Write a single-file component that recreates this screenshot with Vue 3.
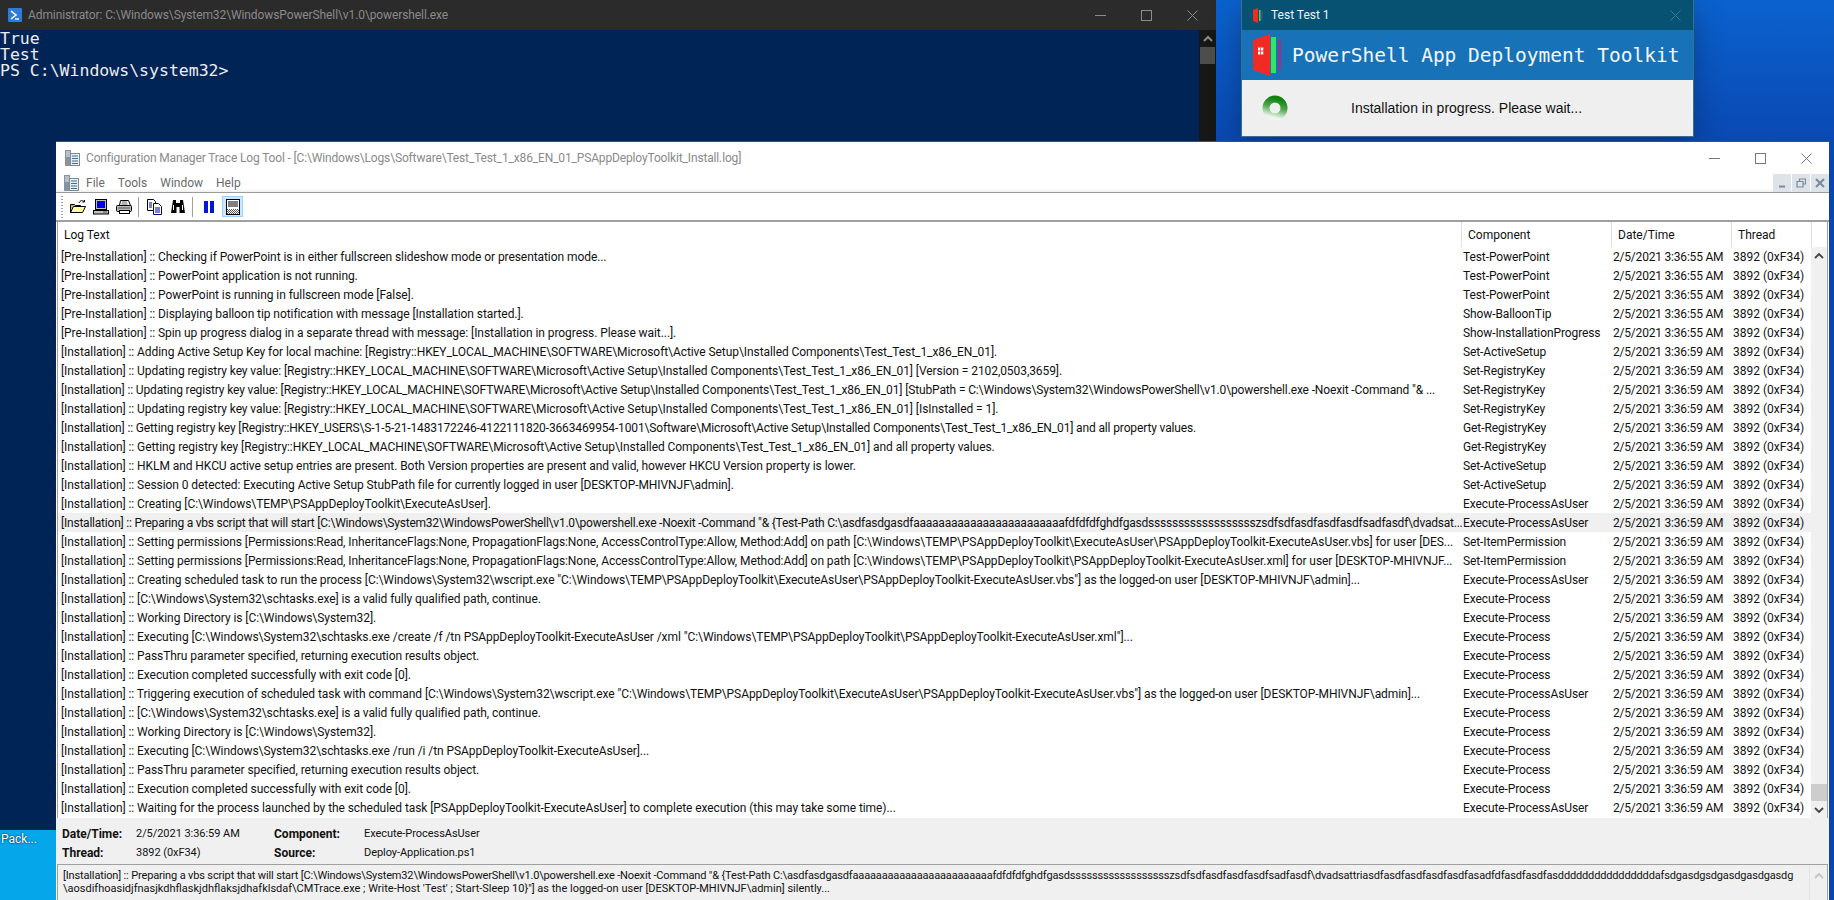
<script setup>
const tag1 = '[Pre-Installation] :: '
const tag2 = '[Installation] :: '
const rows = [
  [tag1 + 'Checking if PowerPoint is in either fullscreen slideshow mode or presentation mode...', 'Test-PowerPoint', '55'],
  [tag1 + 'PowerPoint application is not running.', 'Test-PowerPoint', '55'],
  [tag1 + 'PowerPoint is running in fullscreen mode [False].', 'Test-PowerPoint', '55'],
  [tag1 + 'Displaying balloon tip notification with message [Installation started.].', 'Show-BalloonTip', '55'],
  [tag1 + 'Spin up progress dialog in a separate thread with message: [Installation in progress. Please wait...].', 'Show-InstallationProgress', '55'],
  [tag2 + 'Adding Active Setup Key for local machine: [Registry::HKEY_LOCAL_MACHINE\\SOFTWARE\\Microsoft\\Active Setup\\Installed Components\\Test_Test_1_x86_EN_01].', 'Set-ActiveSetup', '59'],
  [tag2 + 'Updating registry key value: [Registry::HKEY_LOCAL_MACHINE\\SOFTWARE\\Microsoft\\Active Setup\\Installed Components\\Test_Test_1_x86_EN_01] [Version = 2102,0503,3659].', 'Set-RegistryKey', '59'],
  [tag2 + 'Updating registry key value: [Registry::HKEY_LOCAL_MACHINE\\SOFTWARE\\Microsoft\\Active Setup\\Installed Components\\Test_Test_1_x86_EN_01] [StubPath = C:\\Windows\\System32\\WindowsPowerShell\\v1.0\\powershell.exe -Noexit -Command "& ...', 'Set-RegistryKey', '59', false, true],
  [tag2 + 'Updating registry key value: [Registry::HKEY_LOCAL_MACHINE\\SOFTWARE\\Microsoft\\Active Setup\\Installed Components\\Test_Test_1_x86_EN_01] [IsInstalled = 1].', 'Set-RegistryKey', '59'],
  [tag2 + 'Getting registry key [Registry::HKEY_USERS\\S-1-5-21-1483172246-4122111820-3663469954-1001\\Software\\Microsoft\\Active Setup\\Installed Components\\Test_Test_1_x86_EN_01] and all property values.', 'Get-RegistryKey', '59', false, true],
  [tag2 + 'Getting registry key [Registry::HKEY_LOCAL_MACHINE\\SOFTWARE\\Microsoft\\Active Setup\\Installed Components\\Test_Test_1_x86_EN_01] and all property values.', 'Get-RegistryKey', '59'],
  [tag2 + 'HKLM and HKCU active setup entries are present. Both Version properties are present and valid, however HKCU Version property is lower.', 'Set-ActiveSetup', '59'],
  [tag2 + 'Session 0 detected: Executing Active Setup StubPath file for currently logged in user [DESKTOP-MHIVNJF\\admin].', 'Set-ActiveSetup', '59'],
  [tag2 + 'Creating [C:\\Windows\\TEMP\\PSAppDeployToolkit\\ExecuteAsUser].', 'Execute-ProcessAsUser', '59'],
  [tag2 + 'Preparing a vbs script that will start [C:\\Windows\\System32\\WindowsPowerShell\\v1.0\\powershell.exe -Noexit -Command "& {Test-Path C:\\asdfasdgasdfaaaaaaaaaaaaaaaaaaaaaaaafdfdfdfghdfgasdsssssssssssssssssszsdfsdfasdfasdfasdfsadfasdf\\dvadsat...', 'Execute-ProcessAsUser', '59', true],
  [tag2 + 'Setting permissions [Permissions:Read, InheritanceFlags:None, PropagationFlags:None, AccessControlType:Allow, Method:Add] on path [C:\\Windows\\TEMP\\PSAppDeployToolkit\\ExecuteAsUser\\PSAppDeployToolkit-ExecuteAsUser.vbs] for user [DES...', 'Set-ItemPermission', '59'],
  [tag2 + 'Setting permissions [Permissions:Read, InheritanceFlags:None, PropagationFlags:None, AccessControlType:Allow, Method:Add] on path [C:\\Windows\\TEMP\\PSAppDeployToolkit\\PSAppDeployToolkit-ExecuteAsUser.xml] for user [DESKTOP-MHIVNJF...', 'Set-ItemPermission', '59'],
  [tag2 + 'Creating scheduled task to run the process [C:\\Windows\\System32\\wscript.exe "C:\\Windows\\TEMP\\PSAppDeployToolkit\\ExecuteAsUser\\PSAppDeployToolkit-ExecuteAsUser.vbs"] as the logged-on user [DESKTOP-MHIVNJF\\admin]...', 'Execute-ProcessAsUser', '59'],
  [tag2 + '[C:\\Windows\\System32\\schtasks.exe] is a valid fully qualified path, continue.', 'Execute-Process', '59'],
  [tag2 + 'Working Directory is [C:\\Windows\\System32].', 'Execute-Process', '59'],
  [tag2 + 'Executing [C:\\Windows\\System32\\schtasks.exe /create /f /tn PSAppDeployToolkit-ExecuteAsUser /xml "C:\\Windows\\TEMP\\PSAppDeployToolkit\\PSAppDeployToolkit-ExecuteAsUser.xml"]...', 'Execute-Process', '59'],
  [tag2 + 'PassThru parameter specified, returning execution results object.', 'Execute-Process', '59'],
  [tag2 + 'Execution completed successfully with exit code [0].', 'Execute-Process', '59'],
  [tag2 + 'Triggering execution of scheduled task with command [C:\\Windows\\System32\\wscript.exe "C:\\Windows\\TEMP\\PSAppDeployToolkit\\ExecuteAsUser\\PSAppDeployToolkit-ExecuteAsUser.vbs"] as the logged-on user [DESKTOP-MHIVNJF\\admin]...', 'Execute-ProcessAsUser', '59'],
  [tag2 + '[C:\\Windows\\System32\\schtasks.exe] is a valid fully qualified path, continue.', 'Execute-Process', '59'],
  [tag2 + 'Working Directory is [C:\\Windows\\System32].', 'Execute-Process', '59'],
  [tag2 + 'Executing [C:\\Windows\\System32\\schtasks.exe /run /i /tn PSAppDeployToolkit-ExecuteAsUser]...', 'Execute-Process', '59'],
  [tag2 + 'PassThru parameter specified, returning execution results object.', 'Execute-Process', '59'],
  [tag2 + 'Execution completed successfully with exit code [0].', 'Execute-Process', '59'],
  [tag2 + 'Waiting for the process launched by the scheduled task [PSAppDeployToolkit-ExecuteAsUser] to complete execution (this may take some time)...', 'Execute-ProcessAsUser', '59'],
]
const detail1 = tag2 + 'Preparing a vbs script that will start [C:\\Windows\\System32\\WindowsPowerShell\\v1.0\\powershell.exe -Noexit -Command "& {Test-Path C:\\asdfasdgasdfaaaaaaaaaaaaaaaaaaaaaaaafdfdfdfghdfgasdsssssssssssssssssszsdfsdfasdfasdfasdfsadfasdf\\dvadsattriasdfasdfasdfasdfasdfasadfdfasdfasdfasddddddddddddddddafsdgasdgsdgasdgasdgasdg'
const detail2 = "\\aosdifhoasidjfnasjkdhflaskjdhflaksjdhafklsdaf\\CMTrace.exe ; Write-Host 'Test' ; Start-Sleep 10}\"] as the logged-on user [DESKTOP-MHIVNJF\\admin] silently..."
</script>

<template>
  <div class="desktop">
    <section class="ps-win">
      <header class="ps-title">
        <svg class="ps-icon" width="14" height="14" viewBox="0 0 14 14">
          <rect width="14" height="14" rx="1" fill="#2f7bd9" />
          <path d="M3 3l5 4-5 4" fill="none" stroke="#fff" stroke-width="1.6" />
          <path d="M7 11h4" stroke="#fff" stroke-width="1.4" />
        </svg>
        <span class="ps-caption">Administrator: C:\Windows\System32\WindowsPowerShell\v1.0\powershell.exe</span>
        <div class="caption-buttons ps-buttons">
          <svg width="11" height="11" viewBox="0 0 11 11"><path d="M0 5.5h11" stroke="#8b8b8b" /></svg>
          <svg width="11" height="11" viewBox="0 0 11 11"><rect x="0.5" y="0.5" width="10" height="10" fill="none" stroke="#8b8b8b" /></svg>
          <svg width="11" height="11" viewBox="0 0 11 11"><path d="M0.5 0.5l10 10M10.5 0.5l-10 10" stroke="#8b8b8b" /></svg>
        </div>
      </header>
      <pre class="ps-body">True
Test
PS C:\Windows\system32&gt;</pre>
      <div class="ps-scroll">
        <svg width="10" height="8" viewBox="0 0 10 8"><path d="M1 6l4-4 4 4" fill="none" stroke="#8b8b8b" stroke-width="2" /></svg>
        <div class="ps-thumb"></div>
      </div>
    </section>

    <section class="dialog">
      <header class="dlg-title">
        <svg width="10" height="15" viewBox="0 0 10 15">
          <path d="M0 2l5-2v15l-5-2z" fill="#ee2a24" />
          <rect x="6" y="2" width="1.5" height="11" fill="#35e060" />
          <rect x="8.4" y="3" width="1" height="9" fill="#8a3a90" />
        </svg>
        <span>Test Test 1</span>
        <svg class="dlg-close" width="11" height="11" viewBox="0 0 11 11"><path d="M0.5 0.5l10 10M10.5 0.5l-10 10" stroke="#3c7a92" /></svg>
      </header>
      <div class="dlg-banner">
        <svg width="28" height="42" viewBox="0 0 28 42">
          <path d="M0 6L17 0v42L0 36z" fill="#f22a24" />
          <rect x="5" y="13.5" width="2.3" height="3" fill="#fff" />
          <rect x="8" y="13.5" width="2.3" height="3" fill="#fff" />
          <rect x="5" y="17.5" width="2.3" height="3" fill="#fff" />
          <rect x="8" y="17.5" width="2.3" height="3" fill="#fff" />
          <rect x="18" y="3" width="5" height="36" fill="#35e55f" />
          <rect x="25" y="6" width="3" height="30" fill="#8b3a8e" />
        </svg>
        <span class="banner-text">PowerShell App Deployment Toolkit</span>
      </div>
      <div class="dlg-body">
        <svg width="26" height="26" viewBox="0 0 26 26">
          <defs>
            <linearGradient id="spin" x1="0.6" y1="0" x2="0.35" y2="1">
              <stop offset="0" stop-color="#118311" />
              <stop offset="0.45" stop-color="#4da64d" />
              <stop offset="1" stop-color="#f0f5f0" />
            </linearGradient>
          </defs>
          <circle cx="13" cy="13" r="9" fill="none" stroke="url(#spin)" stroke-width="7" />
        </svg>
        <span class="dlg-msg">Installation in progress. Please wait...</span>
      </div>
    </section>

    <section class="cm-win">
      <header class="cm-title">
        <svg class="app-icon" width="16" height="16" viewBox="0 0 16 16">
          <rect x="1" y="0" width="6" height="16" fill="#8794a0" />
          <rect x="6.5" y="3.5" width="9" height="12" fill="#e8eef2" stroke="#7d8b96" />
          <path d="M8 6h6M8 8.5h6M8 11h6M8 13.5h6" stroke="#3f6f94" />
          <path d="M2 2h4M2 4h4M2 6h4" stroke="#e5eaee" />
        </svg>
        <span class="cm-caption">Configuration Manager Trace Log Tool - [C:\Windows\Logs\Software\Test_Test_1_x86_EN_01_PSAppDeployToolkit_Install.log]</span>
        <div class="caption-buttons cm-buttons">
          <svg width="11" height="11" viewBox="0 0 11 11"><path d="M0 5.5h11" stroke="#777" /></svg>
          <svg width="11" height="11" viewBox="0 0 11 11"><rect x="0.5" y="0.5" width="10" height="10" fill="none" stroke="#777" /></svg>
          <svg width="11" height="11" viewBox="0 0 11 11"><path d="M0.5 0.5l10 10M10.5 0.5l-10 10" stroke="#777" /></svg>
        </div>
      </header>
      <nav class="menu">
        <svg class="app-icon" width="16" height="16" viewBox="0 0 16 16">
          <rect x="1" y="0" width="6" height="16" fill="#8794a0" />
          <rect x="6.5" y="3.5" width="9" height="12" fill="#e8eef2" stroke="#7d8b96" />
          <path d="M8 6h6M8 8.5h6M8 11h6M8 13.5h6" stroke="#3f6f94" />
          <path d="M2 2h4M2 4h4M2 6h4" stroke="#e5eaee" />
        </svg>
        <span>File</span><span>Tools</span><span>Window</span><span>Help</span>
        <div class="mdi-buttons">
          <i><svg width="10" height="10" viewBox="0 0 10 10"><path d="M2 8.5h6" stroke="#7a8a99" stroke-width="2" /></svg></i>
          <i><svg width="10" height="10" viewBox="0 0 10 10"><path d="M3.5 3V1h6v5H7.5M1 3.5h6V9H1z" fill="none" stroke="#7a8a99" stroke-width="1.2" /></svg></i>
          <i><svg width="10" height="10" viewBox="0 0 10 10"><path d="M1 1l8 8M9 1L1 9" stroke="#7a8a99" stroke-width="2" /></svg></i>
        </div>
      </nav>
      <div class="toolbar">
        <div class="grip"></div>
        <button class="tool">
          <svg width="16" height="16" viewBox="0 0 16 16"><path d="M0.5 5.5h4l1 1h5v7h-10z" fill="#c9b74a" stroke="#000" /><path d="M0.5 13.5l3-6h12l-3 6z" fill="#ffff9c" stroke="#000" /><path d="M9 4c1-2.5 3-3 5-1.5M14.5 1v2h-2" fill="none" stroke="#000" /></svg>
        </button>
        <button class="tool">
          <svg width="16" height="16" viewBox="0 0 16 16"><rect x="2.5" y="0.5" width="11" height="10" fill="#c0c0c0" stroke="#000" /><rect x="4" y="2" width="8" height="7" fill="#0000e0" /><rect x="0.5" y="11.5" width="15" height="3.5" fill="#c0c0c0" stroke="#000" /><path d="M10 13h4" stroke="#555" /></svg>
        </button>
        <button class="tool">
          <svg width="16" height="16" viewBox="0 0 16 16"><path d="M4.5 1.5h8l2 5h-11z" fill="#fff" stroke="#000" /><path d="M6 3h5M5.5 5h6" stroke="#666" /><rect x="0.5" y="6.5" width="15" height="6" rx="1" fill="#bbb" stroke="#000" /><rect x="3.5" y="11.5" width="10" height="3" fill="#fff" stroke="#000" /><path d="M2 9h12" stroke="#555" /></svg>
        </button>
        <div class="sep"></div>
        <button class="tool">
          <svg width="16" height="16" viewBox="0 0 16 16"><path d="M0.5 0.5h6l2 2v9h-8z" fill="#fff" stroke="#000" /><path d="M6.5 4.5h5l3 3v8h-8z" fill="#fff" stroke="#00008b" /><path d="M2 4h3M2 6h3M2 8h3M8 9h5M8 11h5M8 13h5" stroke="#00008b" /></svg>
        </button>
        <button class="tool">
          <svg width="16" height="16" viewBox="0 0 16 16"><path d="M3 1h3v3h4V1h3l2 13H9.5V8h-3v6H1z" fill="#000" /><path d="M3.5 6v5M12.5 6v5" stroke="#fff" /></svg>
        </button>
        <div class="sep"></div>
        <button class="tool">
          <svg width="16" height="16" viewBox="0 0 16 16"><rect x="3" y="2" width="4" height="12" fill="#0018d8" /><rect x="9" y="2" width="4" height="12" fill="#0018d8" /></svg>
        </button>
        <button class="tool active">
          <svg width="16" height="16" viewBox="0 0 16 16">
            <defs><pattern id="dith" width="2" height="2" patternUnits="userSpaceOnUse"><rect width="2" height="2" fill="#fff" /><rect width="1" height="1" fill="#555" /><rect x="1" y="1" width="1" height="1" fill="#555" /></pattern></defs>
            <rect x="1.5" y="0.5" width="13" height="15" fill="#fff" stroke="#000" />
            <path d="M3 3h10M3 5h10M3 7h10" stroke="#000" />
            <rect x="2" y="10" width="12" height="5" fill="url(#dith)" />
          </svg>
        </button>
      </div>

      <div class="list">
        <div class="list-head">
          <span class="c-text">Log Text</span>
          <span class="c-comp">Component</span>
          <span class="c-date">Date/Time</span>
          <span class="c-thr">Thread</span>
          <span class="c-end"></span>
        </div>
        <div class="list-body">
          <div class="rows">
            <div v-for="(r, i) in rows" :key="i" class="row" :class="{ selected: r[3], tight: r[4] }">
              <span class="c-text">{{ r[0] }}</span>
              <span class="c-comp">{{ r[1] }}</span>
              <span class="c-date">2/5/2021 3:36:{{ r[2] }} AM</span>
              <span class="c-thr">3892 (0xF34)</span>
            </div>
          </div>
          <div class="vscroll">
            <svg width="12" height="8" viewBox="0 0 12 8"><path d="M2 6l4-4 4 4" fill="none" stroke="#444" stroke-width="1.8" /></svg>
            <div class="vthumb"></div>
            <svg class="vdown" width="12" height="8" viewBox="0 0 12 8"><path d="M2 2l4 4 4-4" fill="none" stroke="#444" stroke-width="1.8" /></svg>
          </div>
        </div>
      </div>

      <div class="details">
        <div class="d-grid">
          <b>Date/Time:</b><span>2/5/2021 3:36:59 AM</span><b>Component:</b><span>Execute-ProcessAsUser</span>
          <b>Thread:</b><span>3892 (0xF34)</span><b>Source:</b><span>Deploy-Application.ps1</span>
        </div>
      </div>
      <div class="message">
        <div class="msg-text"><div class="line-one">{{ detail1 }}</div><div>{{ detail2 }}</div></div>
        <div class="msg-scroll">
          <svg width="12" height="8" viewBox="0 0 12 8"><path d="M2 6l4-4 4 4" fill="none" stroke="#c4c4c4" stroke-width="1.8" /></svg>
        </div>
      </div>
    </section>

    <div class="taskbtn"><span>Pack...</span></div>
  </div>
</template>

<style>
html, body { margin: 0; padding: 0; overflow: hidden; }
</style>

<style scoped>
.desktop {
  position: relative;
  width: 1834px;
  height: 900px;
  overflow: hidden;
  background: linear-gradient(#0b62cf, #0a45ae 160px);
  font-family: "Liberation Sans", Arial, sans-serif;
}
.ps-win { position: absolute; left: 0; top: 0; width: 1216px; height: 900px; background: #012456; }
.ps-title {
  height: 30px;
  background: #2b2b2b;
  display: flex;
  align-items: center;
  padding-left: 8px;
  gap: 6px;
  box-sizing: border-box;
}
.ps-caption { color: #8a8a8a; font: 12px Roboto, sans-serif; letter-spacing: -0.1px; white-space: nowrap; }
.caption-buttons { margin-left: auto; display: flex; gap: 35px; }
.ps-buttons { padding-right: 18px; }
.ps-body {
  margin: 0;
  padding-top: 1px;
  color: #eeedf0;
  font: 16.5px/16px "DejaVu Sans Mono", monospace;
}
.ps-scroll {
  position: absolute;
  right: 0;
  top: 30px;
  width: 17px;
  height: 112px;
  background: #171717;
  display: flex;
  flex-direction: column;
  align-items: center;
  padding-top: 5px;
  box-sizing: border-box;
}
.ps-thumb { width: 15px; height: 17px; background: #4d4d4d; margin-top: 4px; }

.dialog {
  position: absolute;
  left: 1242px;
  top: 0;
  width: 451px;
  height: 136px;
  background: #efefef;
  outline: 1px solid #3b6f8c;
  box-shadow: 0 8px 30px rgba(0, 0, 0, 0.3);
}
.dlg-title {
  height: 30px;
  background: #075272;
  color: #eef3f6;
  display: flex;
  align-items: center;
  gap: 8px;
  padding: 0 12px 0 11px;
  font: 12px Roboto, sans-serif;
  box-sizing: border-box;
}
.dlg-close { margin-left: auto; }
.dlg-banner {
  height: 50px;
  background: #1772b8;
  display: flex;
  align-items: center;
  padding-left: 11px;
  gap: 11px;
  box-sizing: border-box;
}
.banner-text { color: #f4f7fa; font: 19.5px "DejaVu Sans Mono", monospace; white-space: nowrap; }
.dlg-body { display: flex; align-items: center; height: 56px; padding-left: 20px; box-sizing: border-box; }
.dlg-msg { margin-left: 63px; font: 14px "Liberation Sans", sans-serif; color: #111; white-space: nowrap; }

.cm-win {
  position: absolute;
  left: 56px;
  top: 142px;
  width: 1773px;
  height: 758px;
  background: #fff;
  display: flex;
  flex-direction: column;
  font: 12px Roboto, sans-serif;
  box-shadow: 0 -1px 0 #33527a;
}
.cm-title {
  height: 32px;
  flex: none;
  display: flex;
  align-items: center;
  padding-left: 8px;
  gap: 6px;
  color: #8a8a8a;
  white-space: nowrap;
}
.cm-caption { letter-spacing: -0.15px; }
.cm-buttons { padding-right: 17px; }
.menu {
  height: 19px;
  flex: none;
  display: flex;
  align-items: center;
  padding-left: 7px;
  gap: 13px;
  color: #6b6b6b;
  border-bottom: 1px solid #9b9b9b;
  box-sizing: border-box;
  background: linear-gradient(#fff 80%, #f0f0f0);
}
.menu .app-icon { margin-right: -6px; }
.mdi-buttons { margin-left: auto; display: flex; gap: 1px; align-self: stretch; }
.mdi-buttons i { width: 18px; background: #dde3e8; display: flex; align-items: center; justify-content: center; }
.toolbar {
  height: 29px;
  flex: none;
  display: flex;
  align-items: center;
  padding-left: 5px;
  background: #fff;
  border-bottom: 2px solid #a0a0a0;
  box-sizing: border-box;
}
.grip { width: 2px; height: 22px; margin-right: 3px; background: repeating-linear-gradient(#a0a0a0 0 1px, transparent 1px 3px); }
.tool { width: 23px; height: 21px; padding: 0; border: 1px solid transparent; background: none; display: flex; align-items: center; justify-content: center; box-sizing: border-box; }
.tool.active { width: 21px; margin-left: 2px; background: #cce8ff; border-color: #99d1ff; }
.sep { width: 1px; height: 20px; background: #a0a0a0; margin: 0 4px 0 3px; }
.list {
  flex: none;
  height: 596px;
  margin: 0 1px;
  border-left: 1px solid #a0a0a0;
  border-right: 1px solid #a0a0a0;
  display: flex;
  flex-direction: column;
  box-sizing: border-box;
  background: #fff;
}
.list-head {
  height: 25px;
  flex: none;
  display: flex;
  color: #111;
}
.list-head span { height: 100%; display: flex; align-items: center; padding-left: 6px; box-sizing: border-box; }
.list-head .c-comp, .list-head .c-date, .list-head .c-thr, .list-head .c-end { border-left: 1px solid #e0e0e0; }
.c-text { width: 1403px; flex: none; }
.c-comp { width: 150px; flex: none; }
.c-date { width: 120px; flex: none; }
.c-thr { width: 80px; flex: none; }
.c-end { width: 16px; flex: none; }
.list-body { flex: 1; display: flex; min-height: 0; }
.rows { width: 1753px; flex: none; overflow: hidden; }
.row { height: 19px; display: flex; align-items: center; white-space: nowrap; color: #111; }
.row span { padding-left: 2px; box-sizing: border-box; }
.row .c-text { padding-left: 3px; letter-spacing: -0.07px; }
.row.tight .c-text { letter-spacing: -0.14px; }
.row.selected .c-text { letter-spacing: -0.22px; }
.row .c-comp { letter-spacing: -0.1px; }
.row .c-date { letter-spacing: -0.2px; }
.row.selected { background: #f0f0f0; }
.vscroll { flex: 1; background: #f0f0f0; display: flex; flex-direction: column; align-items: center; padding-top: 5px; position: relative; }
.vdown { position: absolute; bottom: 4px; }
.vthumb { position: absolute; bottom: 17px; left: 0; right: 0; height: 17px; background: #cdcdcd; }
.details { height: 46px; flex: none; background: #f0f0f0; padding: 6px 0 0 6px; box-sizing: border-box; }
.d-grid { display: grid; grid-template-columns: 74px 138px 90px 1fr; grid-auto-rows: 19px; align-items: center; color: #111; }
.d-grid b { font-weight: 700; }
.d-grid span { font-size: 11px; letter-spacing: -0.05px; }
.message {
  flex: 1;
  background: #f0f0f0;
  border: 1px solid #a0a0a0;
  border-bottom: none;
  margin: 0 1px;
  display: flex;
  min-height: 0;
  font-size: 11px;
  color: #111;
}
.msg-text { flex: 1; padding: 4px 5px 0; line-height: 13px; white-space: nowrap; overflow: hidden; }
.line-one { letter-spacing: -0.15px; }
.msg-scroll { width: 17px; flex: none; display: flex; justify-content: center; padding-top: 7px; border-left: 1px solid #e4e4e4; }

.taskbtn {
  position: absolute;
  left: 0;
  top: 830px;
  width: 56px;
  height: 70px;
  background: #05a6ea;
  color: #fff;
  font: 12px Roboto, sans-serif;
  padding: 2px 0 0 1px;
  box-sizing: border-box;
  text-shadow: 0 0 2px #000;
}
</style>
